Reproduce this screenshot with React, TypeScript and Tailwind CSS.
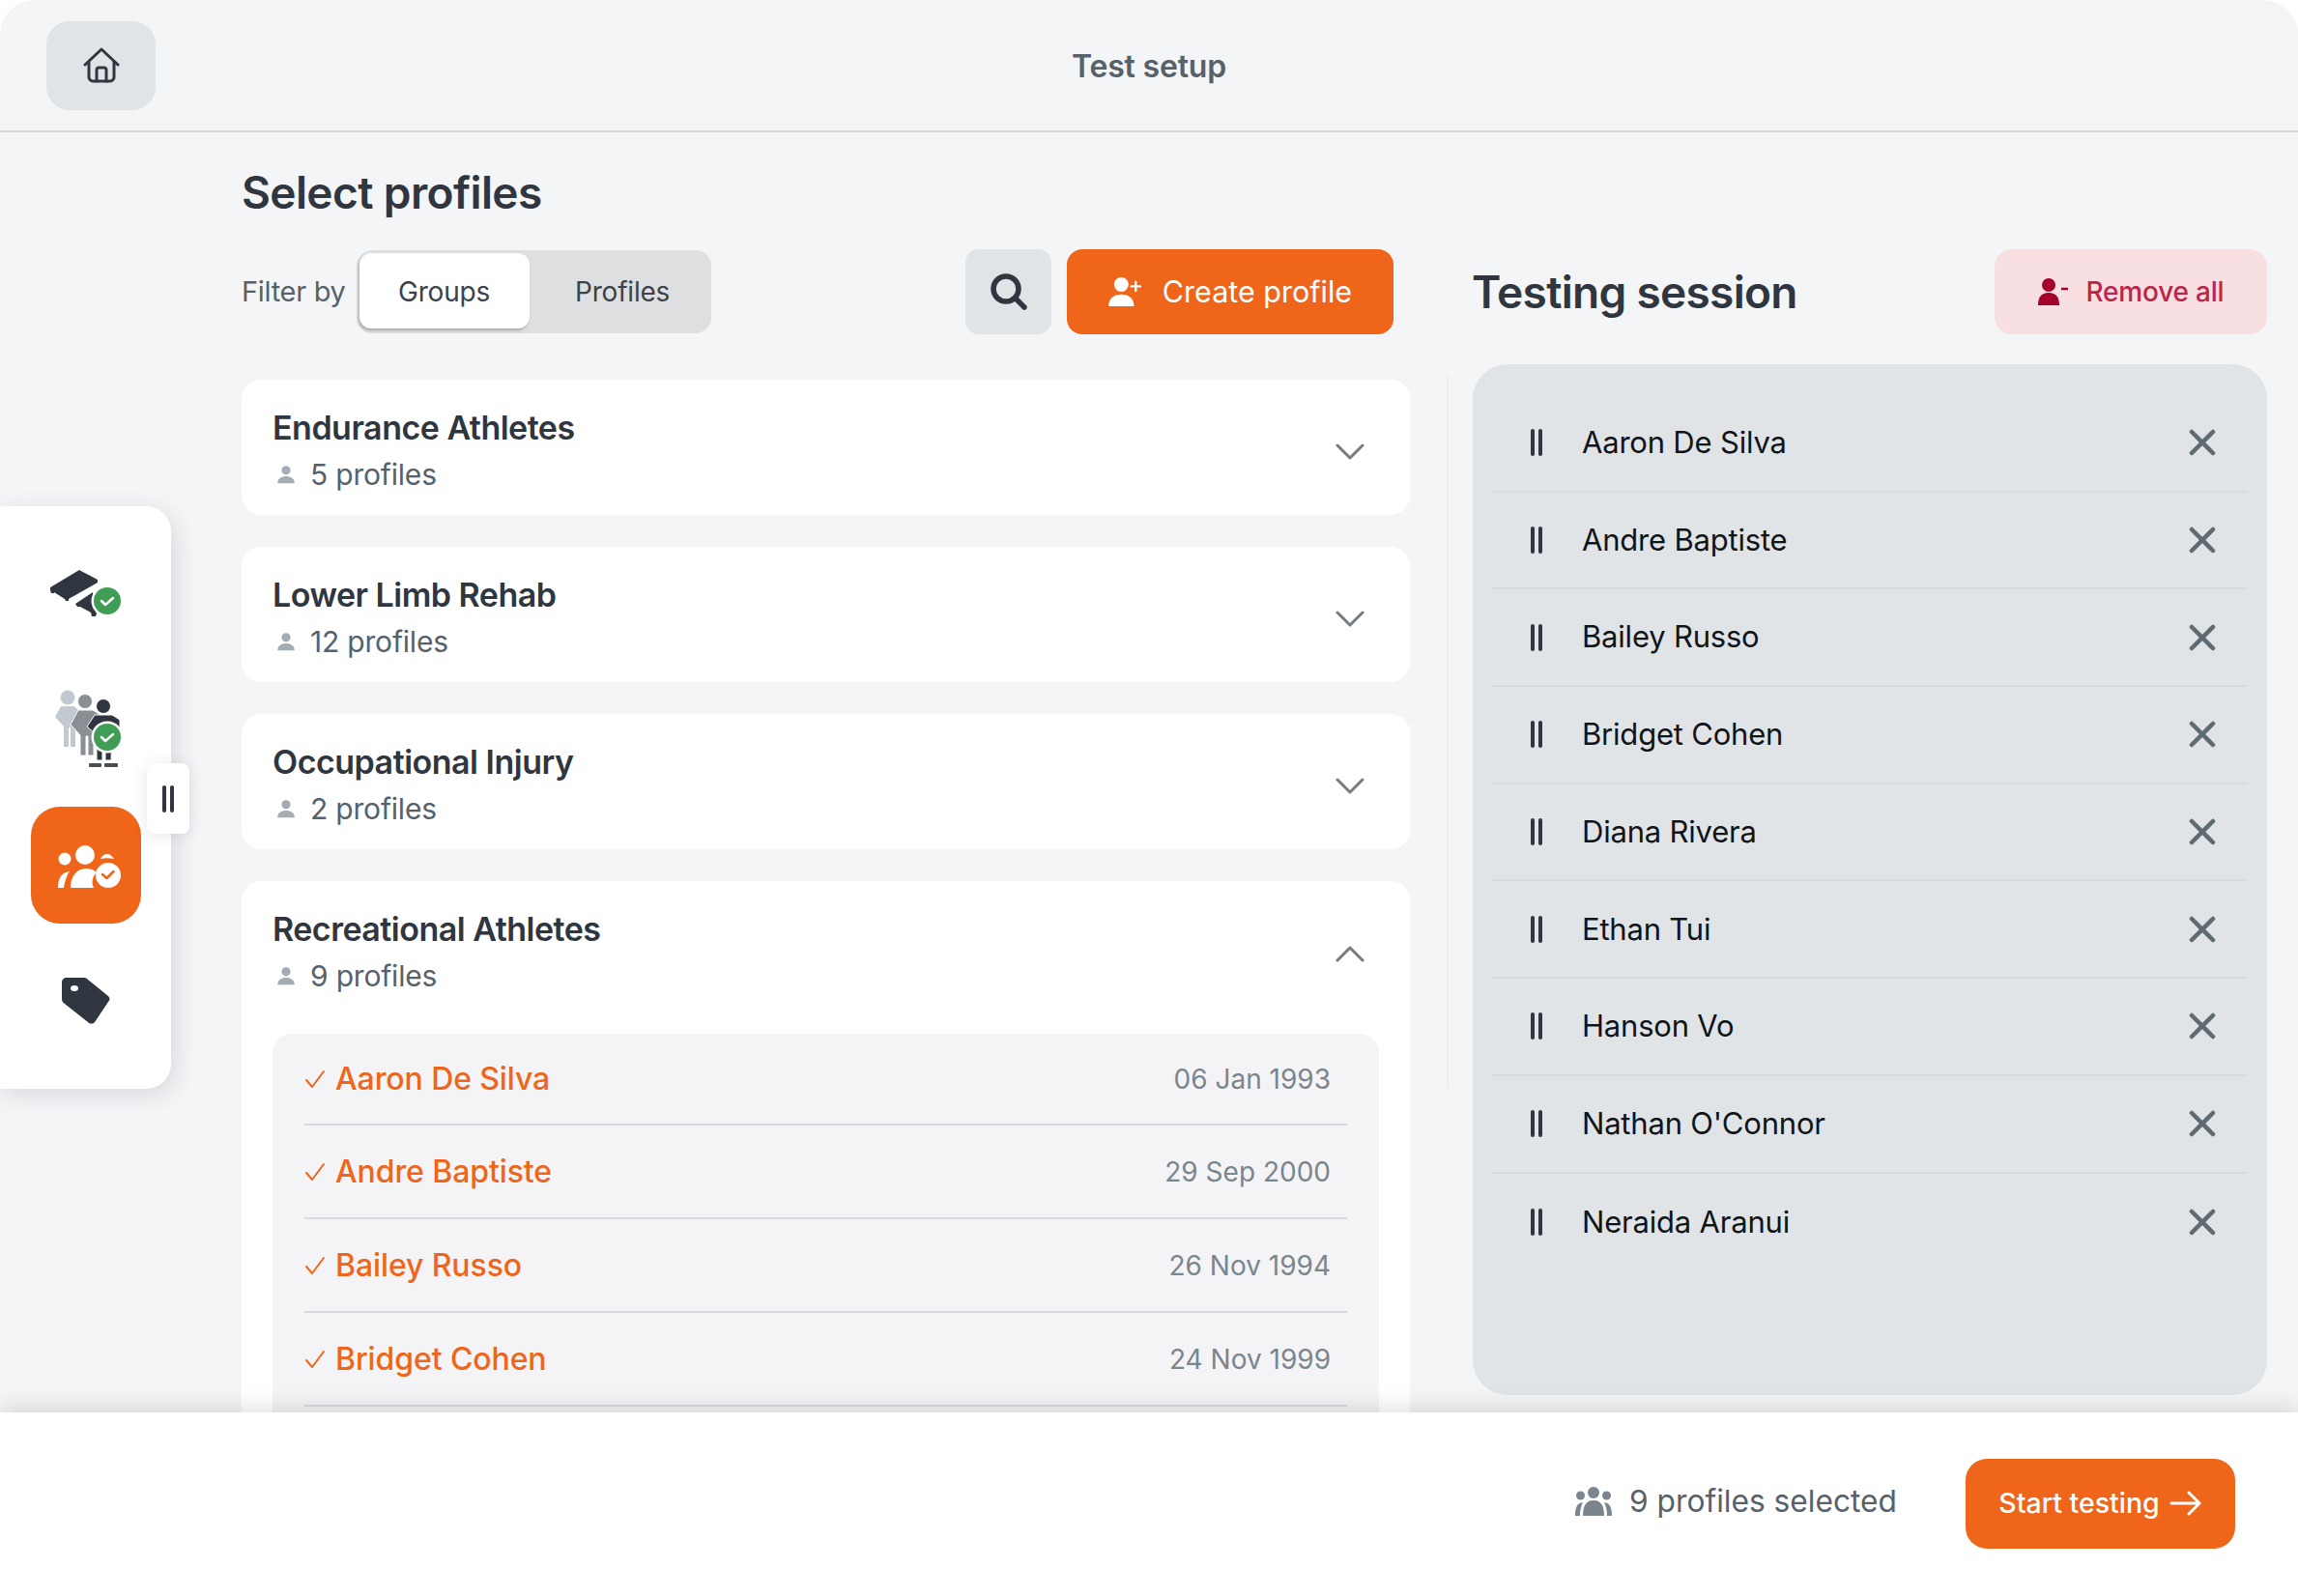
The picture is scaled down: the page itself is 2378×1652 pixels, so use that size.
import React from 'react';

// --- Small drawn icons ---
const PersonIcon = ({ className }: { className?: string }) => (
  <svg viewBox="0 0 24 24" className={className} fill="currentColor">
    <circle cx="12" cy="7" r="5.5" />
    <path d="M1.5 23c0-6 5-8.5 10.500-8.500S22.500 17 22.500 23z" />
  </svg>
);

const Grip = ({ className }: { className?: string }) => (
  <svg viewBox="0 0 14 28" className={className} fill="currentColor">
    <rect x="1" y="0" width="4" height="28" rx="2" />
    <rect x="9" y="0" width="4" height="28" rx="2" />
  </svg>
);

const Chevron = ({ up }: { up?: boolean }) => (
  <svg viewBox="0 0 30 18" className="w-[30px] h-[18px] text-[#757b80]" fill="none" stroke="currentColor" strokeWidth="3" strokeLinecap="round" strokeLinejoin="round">
    <path d={up ? 'M2 16 15 3l13 13' : 'M2 2l13 13L28 2'} />
  </svg>
);

const CheckBadge = ({ cx, cy }: { cx: number; cy: number }) => (
  <g>
    <circle cx={cx} cy={cy} r="16.500" fill="#fff" />
    <circle cx={cx} cy={cy} r="14" fill="#3f9d55" />
    <path d={`M${cx - 6} ${cy}l4 4 8-7`} fill="none" stroke="#fff" strokeWidth="2.500" strokeLinecap="round" strokeLinejoin="round" />
  </g>
);

const TableIcon = () => (
  <svg viewBox="0 0 100 75" className="w-[100px] h-[75px]">
    <path d="M42 15 61 25v3L31 45v2h-3l-1-2-11-7v1h-3l-1-3v-3z" fill="#2f3640" />
    <path d="M38 50l18-12 4 22-1 3h-4l-1-4-11-6h-3z" fill="#2f3640" />
    <CheckBadge cx={71} cy={47} />
  </svg>
);

const PeopleIcon = () => (
  <svg viewBox="0 0 100 100" className="w-[100px] h-[100px]">
    <g fill="#c3c9d0">
      <circle cx="30" cy="17" r="7.500" />
      <path d="M23 26h14l6 6-5 8v28h-5V48h-2v20h-5V47l-9-10z" />
    </g>
    <g fill="#8a8f94" stroke="#f8f9fa" strokeWidth="1">
      <circle cx="48" cy="21" r="7.500" />
      <path d="M41 30h15l8 5-7 9v33h-6V57h-2v20h-6V56l-10-11z" />
    </g>
    <g fill="#2f3640" stroke="#fff" strokeWidth="1">
      <circle cx="67" cy="26" r="7.500" />
      <path d="M58 35h18l8 5v10h-8l-1 32h-6V70h-3v12h-6V56l-10-9z" />
    </g>
    <rect x="52" y="85" width="13" height="4" rx="1" fill="#4a4f55" />
    <rect x="68" y="85" width="14" height="4" rx="1" fill="#4a4f55" />
    <CheckBadge cx={71} cy={58} />
  </svg>
);

const GroupCheckIcon = () => (
  <svg viewBox="0 0 85 70" className="w-[85px] h-[70px]" fill="#fff">
    <circle cx="17" cy="28" r="6.500" />
    <path d="M10 58c0-9 3-16 12-17-3 4-5 10-6 17z" />
    <circle cx="38" cy="24" r="10" />
    <path d="M23 58c0-11 6-20 16-20 4 0 8 1 11 4-4 4-6 10-3 16z" />
    <path d="M54 28c1-3 4-5 7-5s5 2 7 5c-5-1-10-1-14 0z" />
    <circle cx="62" cy="45" r="13" />
    <path d="M56 44l4.500 4 7-7" fill="none" stroke="#ef6519" strokeWidth="2.500" strokeLinecap="round" strokeLinejoin="round" />
  </svg>
);

const TagIcon = () => (
  <svg viewBox="0 0 50 50" className="w-[50px] h-[50px]">
    <path d="M5 1h17c2 0 3 0 5 2l21 17c2 2 2 4 0 6L34 47c-2 2-5 2-7 0L3 28c-2-1-3-3-3-5V6c0-3 2-5 5-5z" fill="#2f3640" />
    <ellipse cx="13" cy="12" rx="4" ry="3" fill="#fff" />
  </svg>
);

const HomeIcon = () => (
  <svg viewBox="0 0 38 38" className="w-[38px] h-[38px] text-[#2f3640]" fill="none" stroke="currentColor" strokeWidth="3" strokeLinecap="round" strokeLinejoin="round">
    <path d="M2 18 19 2l17 16" />
    <path d="M6 15v16c0 2 2 4 4 4h18c2 0 4-2 4-4V15" />
    <path d="M14 35V23c0-1 1-2 2-2h6c1 0 2 1 2 2v12" />
  </svg>
);

const SearchIcon = () => (
  <svg viewBox="0 0 40 40" className="w-[40px] h-[40px] text-[#2f3640]" fill="none" stroke="currentColor" strokeWidth="5.500" strokeLinecap="round">
    <circle cx="17" cy="17" r="13" />
    <path d="M27 27l9 9" />
  </svg>
);

const PersonPlus = () => (
  <svg viewBox="0 0 38 32" className="w-[36px] h-[30px]" fill="#fff">
    <circle cx="14" cy="8" r="8" />
    <path d="M0 32c0-8 5-13 14-13s14 5 14 13z" />
    <path d="M30 5v10M25 10h10" stroke="#fff" strokeWidth="2.500" strokeLinecap="round" />
  </svg>
);

const PersonMinus = () => (
  <svg viewBox="0 0 32 28" className="w-[32px] h-[28px]" fill="#a5012d">
    <circle cx="11" cy="7" r="7" />
    <path d="M0 28c0-8 3-13 11-13s11 5 11 13z" />
    <path d="M24 11h7" stroke="#a5012d" strokeWidth="2.500" />
  </svg>
);

const GroupIcon = () => (
  <svg viewBox="0 0 38 30" className="w-[38px] h-[30px]" fill="#7b858d">
    <circle cx="19" cy="6" r="6" />
    <circle cx="5.500" cy="9" r="4.500" />
    <circle cx="32.500" cy="9" r="4.500" />
    <path d="M8 30c0-10 3-16 11-16s11 6 11 16z" />
    <path d="M0 30c0-9 2-13 8-14-2 4-3 8-3 14zM38 30c0-9-2-13-8-14 2 4 3 8 3 14z" />
  </svg>
);

const SmallCheck = () => (
  <svg viewBox="0 0 22 20" className="w-[22px] h-[20px] text-[#ef6519]" fill="none" stroke="currentColor" strokeWidth="2" strokeLinecap="round" strokeLinejoin="round">
    <path d="M2 11l6 7L20 2" />
  </svg>
);

const CloseIcon = () => (
  <svg viewBox="0 0 28 28" className="w-[28px] h-[28px] text-[#5f6b73]" fill="none" stroke="currentColor" strokeWidth="4.500" strokeLinecap="round">
    <path d="M3 3l22 22M25 3 3 25" />
  </svg>
);

const ArrowIcon = () => (
  <svg viewBox="0 0 34 26" className="w-[34px] h-[26px]" fill="none" stroke="#fff" strokeWidth="3" strokeLinecap="round" strokeLinejoin="round">
    <path d="M2 13h29M20 2l11 11-11 11" />
  </svg>
);

// --- Data ---
const groups = [
  { name: 'Endurance Athletes', count: '5 profiles' },
  { name: 'Lower Limb Rehab', count: '12 profiles' },
  { name: 'Occupational Injury', count: '2 profiles' },
];

const groupProfiles = [
  { name: 'Aaron De Silva', dob: '06 Jan 1993' },
  { name: 'Andre Baptiste', dob: '29 Sep 2000' },
  { name: 'Bailey Russo', dob: '26 Nov 1994' },
  { name: 'Bridget Cohen', dob: '24 Nov 1999' },
];

const session = [
  'Aaron De Silva',
  'Andre Baptiste',
  'Bailey Russo',
  'Bridget Cohen',
  'Diana Rivera',
  'Ethan Tui',
  'Hanson Vo',
  "Nathan O'Connor",
  'Neraida Aranui',
];

const GroupHeader = ({ name, count, up }: { name: string; count: string; up?: boolean }) => (
  <div className="h-[140px] pl-[32px] pr-[47px] pt-[6px] flex items-center justify-between">
    <div>
      <div className="text-[34px] leading-[44px] font-semibold text-[#2f3640] tracking-[-0.5px]">{name}</div>
      <div className="mt-[6px] flex items-center gap-[15px] text-[30px] leading-[40px] text-[#57616a] tracking-[-0.2px]">
        <PersonIcon className="w-[20px] h-[20px] ml-[4px] text-[#a3abb3]" />
        {count}
      </div>
    </div>
    <div className="mt-[4px]">
      <Chevron up={up} />
    </div>
  </div>
);

const App = () => {
  return (
    <div className="relative w-[2378px] h-[1652px] overflow-hidden bg-white font-['Inter',sans-serif]">
      <div className="h-full flex flex-col bg-[#f4f5f7] rounded-t-[36px]">
        {/* Header */}
        <header className="relative h-[137px] shrink-0 border-b-2 border-[#d5d7dd] flex items-center justify-center">
          <button className="absolute left-[48px] top-[22px] w-[113px] h-[92px] rounded-[24px] bg-[#e0e4e7] flex items-center justify-center">
            <HomeIcon />
          </button>
          <h1 className="mt-[2px] text-[32px] font-semibold text-[#57616a] tracking-[-0.2px]">Test setup</h1>
        </header>

        {/* Body */}
        <main className="flex-1 min-h-0 flex pl-[250px] overflow-hidden">
          <section className="w-[1209px] shrink-0">
            <h2 className="mt-[35px] text-[46px] leading-[54px] font-semibold text-[#2f3640] tracking-[-0.6px]">Select profiles</h2>
            <div className="mt-[32px] flex items-center">
              <span className="text-[29px] text-[#57616a] tracking-[-0.3px]">Filter by</span>
              <div className="ml-[11px] w-[367px] h-[86px] rounded-[16px] bg-[#dedfe1] flex items-center p-[3px] pb-[5px]">
                <div className="w-[176px] h-full rounded-[12px] bg-white shadow-[-1px_2px_3px_rgba(0,0,0,0.25)] flex items-center justify-center pt-[2px] text-[28px] text-[#3a424a] tracking-[-0.2px]">Groups</div>
                <div className="flex-1 flex items-center justify-center pl-[8px] pt-[2px] text-[28px] text-[#3a424a] tracking-[-0.2px]">Profiles</div>
              </div>
              <button className="ml-auto w-[89px] h-[88px] rounded-[14px] bg-[#e0e4e7] flex items-center justify-center">
                <SearchIcon />
              </button>
              <button className="ml-[16px] mr-[17px] w-[338px] h-[88px] rounded-[16px] bg-[#ef6519] flex items-center justify-center gap-[20px] text-[30.500px] text-white">
                <PersonPlus />
                Create profile
              </button>
            </div>

            <div className="mt-[47px] flex flex-col gap-[33px]">
              {groups.map((g) => (
                <div key={g.name} className="rounded-[20px] bg-white">
                  <GroupHeader name={g.name} count={g.count} />
                </div>
              ))}
              <div className="rounded-[20px] bg-white">
                <GroupHeader name="Recreational Athletes" count="9 profiles" up />
                <div className="mx-[32px] mt-[18px] rounded-[20px] bg-[#f4f4f7] px-[33px] pb-[40px]">
                  {groupProfiles.map((p) => (
                    <div key={p.name} className="h-[97px] border-b-2 border-[#d5dade] flex items-center justify-between pr-[17px] first:h-[95px]">
                      <div className="flex items-center gap-[10px] text-[32px] font-medium text-[#ef6519] tracking-[-0.1px]">
                        <SmallCheck />
                        {p.name}
                      </div>
                      <span className="text-[28px] text-[#7b858d]">{p.dob}</span>
                    </div>
                  ))}
                </div>
              </div>
            </div>
          </section>

          {/* Divider between the columns */}
          <div className="ml-[38px] mt-[250px] w-[2px] h-[740px] bg-[#eceef0] shrink-0" />

          <section className="ml-[25px] w-[822px] shrink-0">
            <div className="mt-[121px] h-[88px] flex items-center justify-between">
              <h2 className="text-[46px] font-semibold text-[#2f3640] tracking-[-0.7px] -ml-[1px]">Testing session</h2>
              <button className="w-[282px] h-[88px] rounded-[18px] bg-[#f8dfe2] flex items-center justify-center gap-[18px] text-[28px] font-medium text-[#bb2649] tracking-[-0.2px]">
                <PersonMinus />
                Remove all
              </button>
            </div>
            <div className="mt-[31px] h-[1067px] rounded-[36px] bg-[#e0e4e7] px-[20px] pt-[32px]">
              {session.map((name, i) => (
                <div key={name} className={`h-[100.700px] flex items-center pl-[39px] pr-[33px] ${i < session.length - 1 ? 'border-b-2 border-[#d6dbe0]' : ''}`}>
                  <Grip className="w-[14px] h-[28px] text-[#2f3640]" />
                  <span className="ml-[40px] flex-1 text-[31px] text-[#111417] tracking-[-0.2px]">{name}</span>
                  <CloseIcon />
                </div>
              ))}
            </div>
          </section>
        </main>

        {/* Footer */}
        <footer className="relative h-[190px] shrink-0 bg-white shadow-[0_-8px_20px_rgba(0,0,0,0.1)] flex items-center justify-end pr-[65px]">
          <div className="flex items-center gap-[18px] text-[31.700px] text-[#57616a] -mt-[6px]">
            <GroupIcon />
            9 profiles selected
          </div>
          <button className="ml-[71px] -mt-[2px] w-[279px] h-[93px] rounded-[22px] bg-[#ef6519] flex items-center justify-center gap-[10px] text-[28.500px] font-medium text-white">
            Start testing
            <ArrowIcon />
          </button>
        </footer>
      </div>

      {/* Floating side rail */}
      <nav className="absolute left-0 top-[524px] w-[177px] h-[603px] rounded-r-[26px] bg-white shadow-[4px_6px_24px_rgba(40,50,60,0.14)] flex flex-col items-center">
        <div className="mt-[51px] ml-[3px]">
          <TableIcon />
        </div>
        <div className="mt-[55px] ml-[3px]">
          <PeopleIcon />
        </div>
        <div className="mt-[30px] w-[114px] h-[121px] rounded-[30px] bg-[#ef6519] flex items-center justify-center">
          <div className="ml-[7px]">
            <GroupCheckIcon />
          </div>
        </div>
        <div className="mt-[55px]">
          <TagIcon />
        </div>
      </nav>
      <div className="absolute left-[152px] top-[790px] w-[44px] h-[73px] rounded-[8px] bg-white shadow-[0_2px_16px_rgba(40,50,60,0.12)] flex items-center justify-center">
        <Grip className="w-[14px] h-[28px] text-[#2f3640]" />
      </div>
    </div>
  );
};

export default App;
